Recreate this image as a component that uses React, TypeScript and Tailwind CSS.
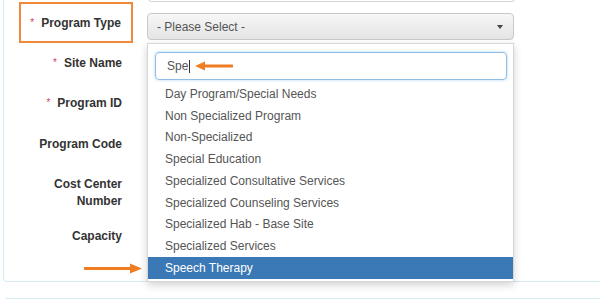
const options = [
  'Day Program/Special Needs',
  'Non Specialized Program',
  'Non-Specialized',
  'Special Education',
  'Specialized Consultative Services',
  'Specialized Counseling Services',
  'Specialized Hab - Base Site',
  'Specialized Services',
  'Speech Therapy',
];

function Req() {
  return <span className="mr-[7px] text-[10px] font-normal text-[#c9485b]">*</span>;
}

function ArrowLeft() {
  return (
    <svg width="38" height="10" viewBox="0 0 38 10">
      <path d="M8 5 H37" stroke="#f07d22" strokeWidth="3" strokeLinecap="round" />
      <path d="M0 5 L10 0.5 L10 9.5 Z" fill="#f07d22" />
    </svg>
  );
}

function ArrowRight() {
  return (
    <svg width="58" height="11" viewBox="0 0 58 11">
      <path d="M1 5.5 H50" stroke="#f07d22" strokeWidth="3" strokeLinecap="round" />
      <path d="M58 5.5 L46 0.5 L46 10.5 Z" fill="#f07d22" />
    </svg>
  );
}

export default function App() {
  return (
    <div className="relative h-[299px] w-[600px] overflow-hidden bg-white font-['Liberation_Sans',Arial,sans-serif] text-[12px] text-[#333]">
      <div className="-mt-[10px] ml-[3px] h-[292px] w-[640px] rounded border border-[#d3ecf1]">
        <div className="ml-[144px] h-[11px] w-[367px] rounded-b border border-t-0 border-[#d4d4d4]" />
        <div className="flex flex-col font-bold">
          <div className="flex h-[41px]">
            <div className="ml-[15px] flex w-[114px] items-center justify-end border-2 border-[#f08a3a] pr-[10px]">
              <Req />
              Program Type
            </div>
            <div className="ml-[14px] mt-[11px] flex h-[27px] w-[367px] items-center justify-between rounded border border-[#c9c9c9] bg-gradient-to-b from-[#f7f7f7] to-[#e4e4e4] pl-[9px] pr-[10px] font-normal text-[#555]">
              <span>- Please Select -</span>
              <span className="h-0 w-0 border-x-[3.5px] border-t-[4px] border-x-transparent border-t-[#444]" />
            </div>
          </div>
          <div className="flex h-[39px] w-[118px] items-center justify-end">
            <Req />
            Site Name
          </div>
          <div className="flex h-[41px] w-[118px] items-center justify-end">
            <Req />
            Program ID
          </div>
          <div className="flex h-[41px] w-[118px] items-center justify-end">Program Code</div>
          <div className="flex h-[58px] w-[118px] flex-col items-end justify-center leading-[17px]">
            <span>Cost Center</span>
            <span>Number</span>
          </div>
          <div className="flex h-[28px] w-[118px] items-center justify-end">Capacity</div>
          <div className="ml-[80px] mt-[13px] flex">
            <ArrowRight />
          </div>
        </div>
      </div>
      <div className="ml-[3px] mt-[16px] h-[10px] w-[640px] rounded-t border border-[#d3ecf1]" />

      <div className="absolute left-[147px] top-[43px] h-[239px] w-[367px] border border-[#d6d6d6] bg-white shadow-[0_3px_8px_rgba(0,0,0,0.18)]">
        <div className="ml-[7px] mt-[8px] flex h-[28px] w-[352px] items-center rounded border border-[#8fbde6] pl-[11px] text-[#555] shadow-[0_0_3px_rgba(102,175,233,0.5)]">
          <span>Spe</span>
          <span className="ml-[1px] h-[13px] w-px bg-[#333]" />
          <span className="ml-[5px] flex">
            <ArrowLeft />
          </span>
        </div>
        <div className="mt-[3px] flex flex-col">
          {options.map((o, i) => (
            <div
              key={o}
              className={
                i === options.length - 1
                  ? 'flex h-[21.75px] items-center bg-[#3b79b6] pl-[17px] text-white'
                  : 'flex h-[21.75px] items-center pl-[17px] text-[#555]'
              }
            >
              {o}
            </div>
          ))}
        </div>
      </div>
    </div>
  );
}
